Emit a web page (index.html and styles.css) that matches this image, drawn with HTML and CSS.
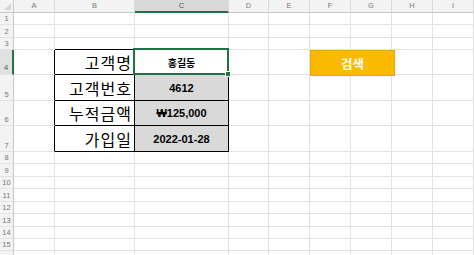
FILE: index.html
```html
<!DOCTYPE html>
<html lang="ko">
<head>
<meta charset="utf-8">
<title>고객 조회</title>
<link rel="stylesheet" href="styles.css">
</head>
<body>
<div class="sheet">
  <div class="corner"><span class="tri"></span></div>
  <div class="ch">A</div><div class="ch">B</div><div class="ch ch-sel">C</div><div class="ch">D</div><div class="ch">E</div><div class="ch">F</div><div class="ch">G</div><div class="ch">H</div><div class="ch">I</div>

  <div class="rh">1</div><div class="c"></div><div class="c"></div><div class="c"></div><div class="c"></div><div class="c"></div><div class="c"></div><div class="c"></div><div class="c"></div><div class="c"></div>
  <div class="rh">2</div><div class="c"></div><div class="c"></div><div class="c"></div><div class="c"></div><div class="c"></div><div class="c"></div><div class="c"></div><div class="c"></div><div class="c"></div>
  <div class="rh">3</div><div class="c"></div><div class="c tb-top"></div><div class="c tb-top"></div><div class="c"></div><div class="c"></div><div class="c"></div><div class="c"></div><div class="c"></div><div class="c"></div>

  <div class="rh rh-sel">4</div><div class="c tb-left"></div><div class="c tb label">고객명</div><div class="c tb val active">홍길동<span class="handle"></span></div><div class="c"></div><div class="c"></div><div class="c"></div><div class="c"></div><div class="c"></div><div class="c"></div>
  <div class="rh">5</div><div class="c tb-left"></div><div class="c tb label">고객번호</div><div class="c tb val filled">4612</div><div class="c"></div><div class="c"></div><div class="c"></div><div class="c"></div><div class="c"></div><div class="c"></div>
  <div class="rh">6</div><div class="c tb-left"></div><div class="c tb label">누적금액</div><div class="c tb val filled">₩125,000</div><div class="c"></div><div class="c"></div><div class="c"></div><div class="c"></div><div class="c"></div><div class="c"></div>
  <div class="rh">7</div><div class="c tb-left"></div><div class="c tb label">가입일</div><div class="c tb val filled">2022-01-28</div><div class="c"></div><div class="c"></div><div class="c"></div><div class="c"></div><div class="c"></div><div class="c"></div>

  <div class="rh">8</div><div class="c"></div><div class="c"></div><div class="c"></div><div class="c"></div><div class="c"></div><div class="c"></div><div class="c"></div><div class="c"></div><div class="c"></div>
  <div class="rh">9</div><div class="c"></div><div class="c"></div><div class="c"></div><div class="c"></div><div class="c"></div><div class="c"></div><div class="c"></div><div class="c"></div><div class="c"></div>
  <div class="rh">10</div><div class="c"></div><div class="c"></div><div class="c"></div><div class="c"></div><div class="c"></div><div class="c"></div><div class="c"></div><div class="c"></div><div class="c"></div>
  <div class="rh">11</div><div class="c"></div><div class="c"></div><div class="c"></div><div class="c"></div><div class="c"></div><div class="c"></div><div class="c"></div><div class="c"></div><div class="c"></div>
  <div class="rh">12</div><div class="c"></div><div class="c"></div><div class="c"></div><div class="c"></div><div class="c"></div><div class="c"></div><div class="c"></div><div class="c"></div><div class="c"></div>
  <div class="rh">13</div><div class="c"></div><div class="c"></div><div class="c"></div><div class="c"></div><div class="c"></div><div class="c"></div><div class="c"></div><div class="c"></div><div class="c"></div>
  <div class="rh">14</div><div class="c"></div><div class="c"></div><div class="c"></div><div class="c"></div><div class="c"></div><div class="c"></div><div class="c"></div><div class="c"></div><div class="c"></div>
  <div class="rh">15</div><div class="c"></div><div class="c"></div><div class="c"></div><div class="c"></div><div class="c"></div><div class="c"></div><div class="c"></div><div class="c"></div><div class="c"></div>
  <div class="rh"></div><div class="c"></div><div class="c"></div><div class="c"></div><div class="c"></div><div class="c"></div><div class="c"></div><div class="c"></div><div class="c"></div><div class="c"></div>

  <div class="btn">검색</div>
</div>
</body>
</html>
```

FILE: styles.css
```css
html, body {
  margin: 0;
  padding: 0;
  background: #ffffff;
}

body {
  width: 474px;
  height: 255px;
  overflow: hidden;
  font-family: "Liberation Sans", "Noto Sans CJK KR", sans-serif;
}

.sheet {
  position: relative;
  display: grid;
  grid-template-columns: 14px 41px 80px 94px 40px 41px 41px 41px 41px 41px;
  grid-template-rows: 13px 12.33px 12.33px 12.34px 25.5px 25.5px 25.5px 25.5px repeat(9, 12.44px);
  width: 474px;
}

.sheet > div {
  box-sizing: border-box;
}

.corner {
  position: relative;
  background: #f3f3f3;
  border-right: 1px solid #c8c8c8;
  border-bottom: 1px solid #c8c8c8;
}

.tri {
  position: absolute;
  right: 2px;
  bottom: 2px;
  width: 0;
  height: 0;
  border-left: 7px solid transparent;
  border-bottom: 7px solid #d6d6d6;
}

.ch {
  background: #f3f3f3;
  border-right: 1px solid #dadada;
  border-bottom: 1px solid #c8c8c8;
  color: #777777;
  font-size: 7.5px;
  line-height: 12px;
  text-align: center;
}

.ch-sel {
  background: #d9d9d9;
  border-bottom: 2px solid #217346;
  color: #555555;
}

.rh {
  display: flex;
  align-items: flex-end;
  justify-content: center;
  background: #f3f3f3;
  border-right: 1px solid #c8c8c8;
  border-bottom: 1px solid #e4e4e4;
  color: #777777;
  font-size: 7.5px;
  line-height: 8px;
  padding-bottom: 1px;
}

.rh-sel {
  background: #e1e1e1;
  border-right: 2px solid #217346;
  color: #555555;
  padding-bottom: 2px;
}

.c {
  border-right: 1px solid #e2e2e2;
  border-bottom: 1px solid #e2e2e2;
}

.tb-top {
  border-bottom: 1px solid #000000;
}

.tb-left {
  border-right: 1px solid #000000;
}

.tb {
  border-right: 1px solid #000000;
  border-bottom: 1px solid #000000;
}

.label {
  display: flex;
  align-items: center;
  justify-content: flex-end;
  padding-right: 2px;
  font-family: "Noto Sans CJK KR", sans-serif;
  font-size: 16px;
  letter-spacing: 1px;
  color: #000000;
}

.val {
  display: flex;
  align-items: center;
  justify-content: center;
  font-weight: bold;
  font-size: 11px;
  color: #000000;
}

.filled {
  background: #d9d9d9;
}

.active {
  position: relative;
  font-family: "Noto Sans CJK KR", sans-serif;
  font-size: 10px;
}

.active::after {
  content: "";
  position: absolute;
  left: -2px;
  top: -2px;
  right: -1px;
  bottom: -1px;
  border: 2px solid #217346;
}

.handle {
  position: absolute;
  right: -3px;
  bottom: -3px;
  width: 4px;
  height: 4px;
  background: #217346;
  border: 1px solid #ffffff;
  z-index: 2;
}

.btn {
  position: absolute;
  left: 310px;
  top: 50px;
  width: 85px;
  height: 26px;
  display: flex;
  align-items: center;
  justify-content: center;
  background: #fbb900;
  border: 1px solid #e8a800;
  color: #ffffff;
  font-family: "Noto Sans CJK KR", sans-serif;
  font-weight: bold;
  font-size: 12.5px;
}
```
